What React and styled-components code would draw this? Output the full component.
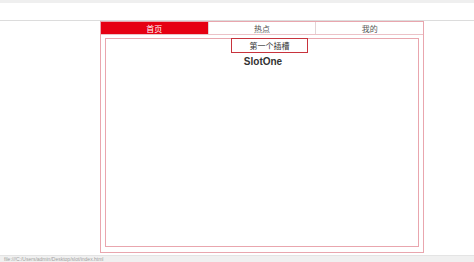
import React, { useState } from "react";
import styled, { createGlobalStyle } from "styled-components";

const GlobalStyle = createGlobalStyle`
  html, body {
    margin: 0;
    padding: 0;
    background: #ffffff;
    font-family: "Microsoft YaHei", "Noto Sans CJK SC", "Liberation Sans", sans-serif;
  }
`;

const Page = styled.div`
  display: flex;
  flex-direction: column;
  width: 474px;
  height: 262px;
  overflow: hidden;
`;

const TopStrip = styled.div`
  height: 3px;
  background: #efefef;
`;

const Ruler = styled.div`
  height: 17px;
  border-bottom: 1px solid #dcdcdc;
`;

const Frame = styled.div`
  display: flex;
  flex-direction: column;
  margin-left: 100px;
  width: 324px;
  height: 232px;
  box-sizing: border-box;
  border: 1px solid #e9a6ae;
`;

const Tabs = styled.div`
  display: flex;
  height: 12px;
  border-bottom: 1px solid #ecc2c7;
`;

const Tab = styled.div`
  flex: 1;
  display: flex;
  align-items: center;
  justify-content: center;
  font-size: 8px;
  color: ${(p) => (p.$active ? "#ffffff" : "#555555")};
  background: ${(p) => (p.$active ? "#e60012" : "#ffffff")};
  border-right: 1px solid #e2d4d6;
  &:last-child {
    border-right: none;
  }
`;

const Slot = styled.div`
  flex: 1;
  display: flex;
  flex-direction: column;
  margin: 3px 4px 5px 4px;
  border: 1px solid #e9a6ae;
`;

const SlotTitle = styled.div`
  align-self: flex-start;
  margin-left: 125px;
  margin-top: -1px;
  width: 77px;
  height: 15px;
  box-sizing: border-box;
  border: 1px solid #c8333d;
  display: flex;
  align-items: center;
  justify-content: center;
  font-size: 8px;
  color: #333333;
`;

const SlotName = styled.div`
  margin-top: 3px;
  padding-left: 2px;
  text-align: center;
  font-family: "Liberation Sans", Arial, sans-serif;
  font-weight: bold;
  font-size: 10px;
  color: #333333;
`;

const StatusBar = styled.div`
  margin-top: auto;
  height: 6px;
  background: #f0f0f0;
  border-top: 1px solid #e4e4e4;
  overflow: hidden;
  font-family: "Liberation Sans", Arial, sans-serif;
  font-size: 5px;
  line-height: 6px;
  color: #a0a0a0;
  padding-left: 4px;
  white-space: nowrap;
`;

const tabs = ["首页", "热点", "我的"];

export default function App() {
  const [active, setActive] = useState(0);
  return (
    <>
      <GlobalStyle />
      <Page>
        <TopStrip />
        <Ruler />
        <Frame>
          <Tabs>
            {tabs.map((t, i) => (
              <Tab key={t} $active={i === active} onClick={() => setActive(i)}>
                {t}
              </Tab>
            ))}
          </Tabs>
          <Slot>
            <SlotTitle>第一个插槽</SlotTitle>
            <SlotName>SlotOne</SlotName>
          </Slot>
        </Frame>
        <StatusBar>file:///C:/Users/admin/Desktop/slot/index.html</StatusBar>
      </Page>
    </>
  );
}
